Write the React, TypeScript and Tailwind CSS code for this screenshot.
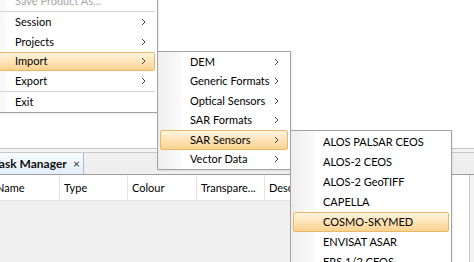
import React from 'react'

type Item =
  | { kind: 'item'; label: string; sub?: boolean; active?: boolean; disabled?: boolean }
  | { kind: 'sep' }

const mainItems: Item[] = [
  { kind: 'item', label: 'Save Product As...', disabled: true },
  { kind: 'sep' },
  { kind: 'item', label: 'Session', sub: true },
  { kind: 'item', label: 'Projects', sub: true },
  { kind: 'item', label: 'Import', sub: true, active: true },
  { kind: 'item', label: 'Export', sub: true },
  { kind: 'sep' },
  { kind: 'item', label: 'Exit' },
]

const importItems: Item[] = [
  { kind: 'item', label: 'DEM', sub: true },
  { kind: 'item', label: 'Generic Formats', sub: true },
  { kind: 'item', label: 'Optical Sensors', sub: true },
  { kind: 'item', label: 'SAR Formats', sub: true },
  { kind: 'item', label: 'SAR Sensors', sub: true, active: true },
  { kind: 'item', label: 'Vector Data', sub: true },
]

const sarItems: Item[] = [
  { kind: 'item', label: 'ALOS PALSAR CEOS' },
  { kind: 'item', label: 'ALOS-2 CEOS' },
  { kind: 'item', label: 'ALOS-2 GeoTIFF' },
  { kind: 'item', label: 'CAPELLA' },
  { kind: 'item', label: 'COSMO-SKYMED', active: true },
  { kind: 'item', label: 'ENVISAT ASAR' },
  { kind: 'item', label: 'ERS 1/2 CEOS' },
]

const Chevron = () => (
  <svg width="5" height="8" viewBox="0 0 5 8" className="shrink-0">
    <path d="M1 1 L4 4 L1 7" fill="none" stroke="#444" strokeWidth="1" />
  </svg>
)

const Menu: React.FC<{ items: Item[]; rowClass: string; className: string }> = ({
  items,
  rowClass,
  className,
}) => (
  <div className={`absolute bg-white border border-[#a3a3a3] shadow-[1px_1px_2px_rgba(0,0,0,0.08)] ${className}`}>
    <div className="absolute left-0 top-0 bottom-0 w-[24px] bg-gradient-to-r from-[#eeeeee] to-[#fbfbfb]" />
    <div className="relative flex flex-col">
      {items.map((it, i) =>
        it.kind === 'sep' ? (
          <div key={i} className="h-[2px] mx-[2px] flex flex-col justify-center">
            <div className="h-px bg-[#d5d5d5]" />
          </div>
        ) : (
          <div
            key={i}
            className={`${rowClass} mx-[2px] flex items-center pl-[29px] pr-[8px] rounded-[2px] border ${
              it.active
                ? 'border-[#e6b868] bg-gradient-to-b from-[#fff4df] to-[#fbd28e]'
                : 'border-transparent'
            }`}
          >
            <span className={`flex-1 whitespace-nowrap ${it.disabled ? 'text-[#a6a6a6]' : 'text-black'}`}>
              {it.label}
            </span>
            {it.sub && <Chevron />}
          </div>
        ),
      )}
    </div>
  </div>
)

export default function App() {
  const cols = [
    { label: 'Name', w: 'w-[68px]' },
    { label: 'Type', w: 'w-[68px]' },
    { label: 'Colour', w: 'w-[69px]' },
    { label: 'Transpare...', w: 'w-[68px]' },
    { label: 'Description', w: 'w-[68px]' },
  ]
  return (
    <div className="relative w-[474px] h-[262px] overflow-hidden bg-white font-['Lato',sans-serif] text-[11px]">
      <div className="flex flex-col h-full">
        <div className="h-[148px] bg-white" />
        <div className="h-px bg-[#c4c4c4]" />
        <div className="h-[3px] bg-[#f3f3f3]" />
        <div className="flex flex-1 min-h-0">
          {/* Task Manager panel */}
          <div className="w-[291px] flex flex-col border-r border-[#a8a8a8] overflow-hidden">
            <div className="h-[23px] flex bg-[#efefef] border-t border-[#c9c9c9] border-b border-b-[#9d9d9d]">
              <div className="w-[84px] flex items-center border-r border-[#a9bccd] bg-gradient-to-b from-[#f7fbfe] to-[#e4eef8] pr-[3px] overflow-hidden">
                <span className="font-bold text-[12px] text-[#111] whitespace-nowrap -ml-[7px] flex-1">Task Manager</span>
                <span className="text-[#333] text-[12px] leading-none">×</span>
              </div>
            </div>
            <div className="h-[26px] flex bg-white border-b border-[#e4e4e4] -ml-[8px]">
              {cols.map((c) => (
                <div
                  key={c.label}
                  className={`${c.w} shrink-0 flex items-center pl-[4px] pt-[2px] border-r border-[#e4e4e4] overflow-hidden whitespace-nowrap text-black`}
                >
                  {c.label}
                </div>
              ))}
            </div>
            <div className="flex-1 bg-[#f0f0f0]" />
          </div>
          {/* right panel */}
          <div className="flex-1 flex flex-col">
            <div className="h-[23px] bg-[#efefef] border-t border-[#c9c9c9] border-b border-b-[#9d9d9d]" />
            <div className="flex-1 flex justify-end bg-white">
              <div className="w-[5px] border-l border-[#c4c4c4] bg-[#f3f3f3]" />
            </div>
          </div>
        </div>
      </div>

      <Menu items={mainItems} rowClass="h-[19.5px]" className="left-[-18px] top-[-10px] w-[176px]" />
      <Menu items={importItems} rowClass="h-[19.5px]" className="left-[157px] top-[51px] w-[134px]" />
      <Menu items={sarItems} rowClass="h-[20px] first:mt-px" className="left-[290px] top-[130px] w-[162px]" />
    </div>
  )
}
